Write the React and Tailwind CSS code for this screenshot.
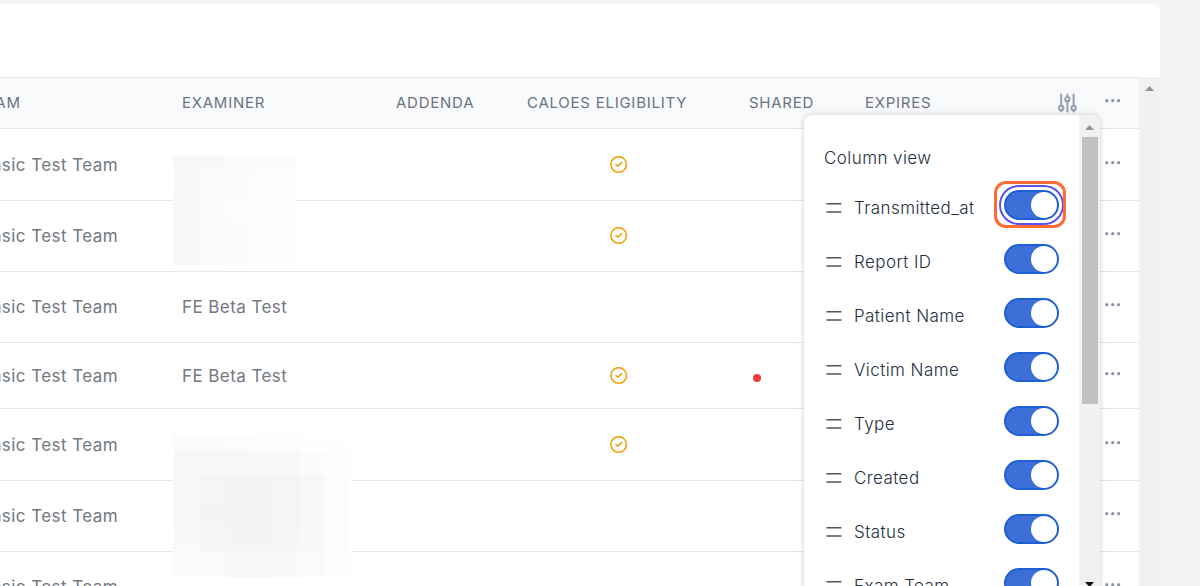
import React, { useState } from 'react'

const rows = [
  { id: 1, height: 'h-[72px]', examiner: '', eligible: true, shared: false },
  { id: 2, height: 'h-[71px]', examiner: '', eligible: true, shared: false },
  { id: 3, height: 'h-[71px]', examiner: 'FE Beta Test', eligible: false, shared: false },
  { id: 4, height: 'h-[66px]', examiner: 'FE Beta Test', eligible: true, shared: true },
  { id: 5, height: 'h-[72px]', examiner: '', eligible: true, shared: false },
  { id: 6, height: 'h-[71px]', examiner: '', eligible: false, shared: false },
  { id: 7, height: 'h-[71px]', examiner: '', eligible: false, shared: false },
]

const columnNames = [
  'Transmitted_at',
  'Report ID',
  'Patient Name',
  'Victim Name',
  'Type',
  'Created',
  'Status',
  'Exam Team',
]

// Colours of the blocks that hide examiner names
const smallMosaic = [
  ['#f8f8f6', '#f8f8f7', '#fafaf8', '#fbfbf9', '#fcfbf9'],
  ['#f9f9f9', '#fafaf8', '#fbfbf9', '#fdfcfa', '#fdfcfa'],
  ['#f8f8f8', '#fafafa', '#fcfcfa', '#fdfdfb', '#fdfcfa'],
  ['#f6f8f7', '#fafafa', '#fbfbfb', '#fdfdfb', '#fdfdfb'],
]

const largeMosaic = [
  ['#fafbfb', '#fafbfb', '#fbfdfc', '#fcfdfd', '#fcfdfc', '#fdfefd', '#fefefe'],
  ['#f7f8fa', '#f7f8f9', '#f6f7f7', '#f7f7f7', '#f8f8f7', '#fbfbfb', '#fdfdfd'],
  ['#f6f7f9', '#f4f5f6', '#f3f3f4', '#f4f4f4', '#f5f5f5', '#f9f8f7', '#fcfcfc'],
  ['#f7f8fa', '#f4f4f5', '#f3f3f3', '#f3f3f3', '#f6f5f5', '#f9f8f7', '#fdfcfb'],
  ['#f8f9fb', '#f5f6f6', '#f4f4f4', '#f4f4f4', '#f7f6f6', '#f9f8f8', '#fdfcfb'],
  ['#fafbfb', '#f8fafc', '#f8f8f8', '#f8f8f8', '#f9f9f9', '#fafaf9', '#fdfdfb'],
]

function CheckBadge() {
  return (
    <svg className="block h-[18px] w-[18px]" viewBox="0 0 18 18" fill="none" stroke="#f59e0b" role="img" aria-label="Eligible">
      <circle cx="8.7" cy="8.5" r="7.8" strokeWidth="1.6" />
      <path d="M6 8.7 8 10.1 11.6 6.7" strokeWidth="1.6" strokeLinecap="round" strokeLinejoin="round" />
    </svg>
  )
}

function DotsIcon() {
  return (
    <svg className="block h-1 w-4" viewBox="0 0 16 4" fill="#8b92a5">
      <circle cx="1.8" cy="1.7" r="1.6" />
      <circle cx="7.7" cy="1.7" r="1.6" />
      <circle cx="13.6" cy="1.7" r="1.6" />
    </svg>
  )
}

function SlidersIcon() {
  return (
    <svg className="block h-5 w-5" viewBox="0 0 20 20" fill="none" stroke="#9aa1b0" strokeWidth="2.1" strokeLinecap="round">
      <path d="M3.2 1.6v10.6M3.2 17.6v.8M9.4 1.6v1.8M9.4 8.4v10M15.6 1.6v10.6M15.6 17.6v.8" />
      <circle cx="3.2" cy="14.9" r="2.2" />
      <circle cx="9.4" cy="6.2" r="2.2" />
      <circle cx="15.6" cy="14.9" r="2.2" />
    </svg>
  )
}

function DragHandle() {
  return (
    <svg className="block h-4 w-4" viewBox="0 0 16 16" fill="none" stroke="#4b5563" strokeWidth="1.6">
      <path d="M0.4 3.7h15M0.4 12h15" />
    </svg>
  )
}

function UpArrow() {
  return (
    <svg className="block h-[5px] w-[9px]" viewBox="0 0 9 5" fill="#929292">
      <path d="M4.5 0 9 5H0z" />
    </svg>
  )
}

function ColumnToggle({ name, checked, highlighted, onChange }) {
  return (
    <label className="flex h-[54px] cursor-pointer items-center">
      <span className="flex flex-1 items-center gap-3 pt-1.5 pl-0.5">
        <DragHandle />
        <span>{name}</span>
      </span>
      <span className="relative">
        <input type="checkbox" className="peer sr-only" checked={checked} onChange={onChange} />
        <span
          className={`flex h-[30px] w-[55px] items-center rounded-full border-2 ${
            checked ? 'justify-end border-[#1f5fd4] bg-[#3c6fd8]' : 'justify-start border-gray-300 bg-gray-300'
          } ${highlighted ? 'ring-2 ring-[#5b50f0] ring-offset-3' : ''}`}
        >
          <span className="h-[26px] w-[26px] rounded-full bg-white" />
        </span>
        {highlighted && (
          <span className="pointer-events-none absolute -top-[9px] -right-[7px] -bottom-2 -left-[10px] rounded-xl border-3 border-[#ff6b35]" />
        )}
      </span>
    </label>
  )
}

function ColumnPanel() {
  const [visible, setVisible] = useState(columnNames)

  const toggleColumn = (name) => {
    setVisible(visible.includes(name) ? visible.filter((n) => n !== name) : [...visible, name])
  }

  return (
    <div className="absolute top-[38px] right-[39px] flex h-[480px] w-[296px] overflow-hidden rounded-lg bg-white shadow-[0_0_6px_rgba(0,0,0,0.18)]">
      <div className="flex-1 overflow-hidden pt-[31px] pr-5 pl-5 text-[17px] leading-6 font-light tracking-wide text-[#252f3f]">
        <h2 className="mb-2">Column view</h2>
        {columnNames.map((name, i) => (
          <ColumnToggle
            key={name}
            name={name}
            checked={visible.includes(name)}
            highlighted={i === 0}
            onChange={() => toggleColumn(name)}
          />
        ))}
      </div>
      {/* Scroll track */}
      <div className="flex w-[21px] flex-col items-center bg-[#f1f1f1]">
        <div className="flex h-[22px] items-center pt-0.5">
          <UpArrow />
        </div>
        <div className="h-[267px] w-4 bg-[#c1c1c1]" />
        <svg className="mt-auto mb-2 block h-[5px] w-[9px]" viewBox="0 0 9 5" fill="#111">
          <path d="M0 0h9L4.5 5z" />
        </svg>
      </div>
    </div>
  )
}

function Mosaic({ blocks, className }) {
  return (
    <div className={className}>
      {blocks.flat().map((color, i) => (
        <span key={i} style={{ backgroundColor: color }} />
      ))}
    </div>
  )
}

const headCell = 'h-[52px] border-y border-[#e5e7eb] bg-[#f9fafc] text-left text-[15px] leading-5 font-normal tracking-wider whitespace-nowrap text-[#6b7280] uppercase'
const bodyCell = 'border-b border-[#e5e7eb] pl-8 whitespace-nowrap'

function ReportTable() {
  return (
    <table className="-ml-[120px] w-[calc(100%+120px)] table-fixed border-separate border-spacing-0 text-[17px] leading-6 tracking-wide text-[#737881]">
      <colgroup>
        <col className="w-[270px]" />
        <col className="w-[214px]" />
        <col className="w-[131px]" />
        <col className="w-[222px]" />
        <col className="w-[116px]" />
        <col />
        <col className="w-[113px]" />
      </colgroup>
      <thead>
        <tr>
          <th className={`${headCell} pl-11`}>Exam Team</th>
          <th className={`${headCell} pl-8`}>Examiner</th>
          <th className={`${headCell} pl-8`}>Addenda</th>
          <th className={`${headCell} pl-8`}>CalOES Eligibility</th>
          <th className={`${headCell} pl-8`}>Shared</th>
          <th className={`${headCell} pl-8`}>Expires</th>
          <th className={headCell}>
            <div className="flex items-center justify-end gap-[27px] pr-[18px]">
              <button type="button" aria-label="Column view"><SlidersIcon /></button>
              <button type="button" aria-label="More" className="pb-1"><DotsIcon /></button>
            </div>
          </th>
        </tr>
      </thead>
      <tbody>
        {rows.map((row) => (
          <tr key={row.id} className={row.height}>
            <td className={`${bodyCell} pr-8 text-right`}>Forensic Test Team</td>
            <td className={bodyCell}>{row.examiner}</td>
            <td className={bodyCell} />
            <td className={bodyCell}>
              {row.eligible && <div className="pl-[83px]"><CheckBadge /></div>}
            </td>
            <td className={bodyCell}>
              {row.shared && <div className="mt-1 ml-1 h-2 w-2 rounded-full bg-[#ef3b3b]" />}
            </td>
            <td className={bodyCell} />
            <td className={bodyCell}>
              <div className="flex justify-end pr-[18px] pb-1">
                <button type="button" aria-label="Row actions"><DotsIcon /></button>
              </div>
            </td>
          </tr>
        ))}
      </tbody>
    </table>
  )
}

function App() {
  return (
    <div className="flex h-screen overflow-hidden bg-[#f3f4f6] pt-1 pr-10 font-['Inter',sans-serif]">
      <div className="flex min-w-0 flex-1 flex-col overflow-hidden rounded-tr-lg bg-white">
        <div className="h-[73px] shrink-0" />
        <div className="flex min-h-0 flex-1">
          <div className="relative min-w-0 flex-1 overflow-hidden">
            <ReportTable />
            <Mosaic
              blocks={smallMosaic}
              className="absolute top-[79px] left-[173px] grid grid-cols-[27px_25px_25px_25px_20px] grid-rows-[14px_25px_27px_43px]"
            />
            <Mosaic
              blocks={largeMosaic}
              className="absolute top-[358px] left-[173px] grid grid-cols-[27px_25px_25px_25px_25px_25px_25px] grid-rows-[16px_24px_26px_25px_25px_26px] bg-white pr-[3px] pb-3"
            />
            <ColumnPanel />
          </div>
          {/* Page scroll track */}
          <div className="flex w-[21px] justify-center bg-[#f1f1f1] pt-[9px]">
            <UpArrow />
          </div>
        </div>
      </div>
    </div>
  )
}

export default App
